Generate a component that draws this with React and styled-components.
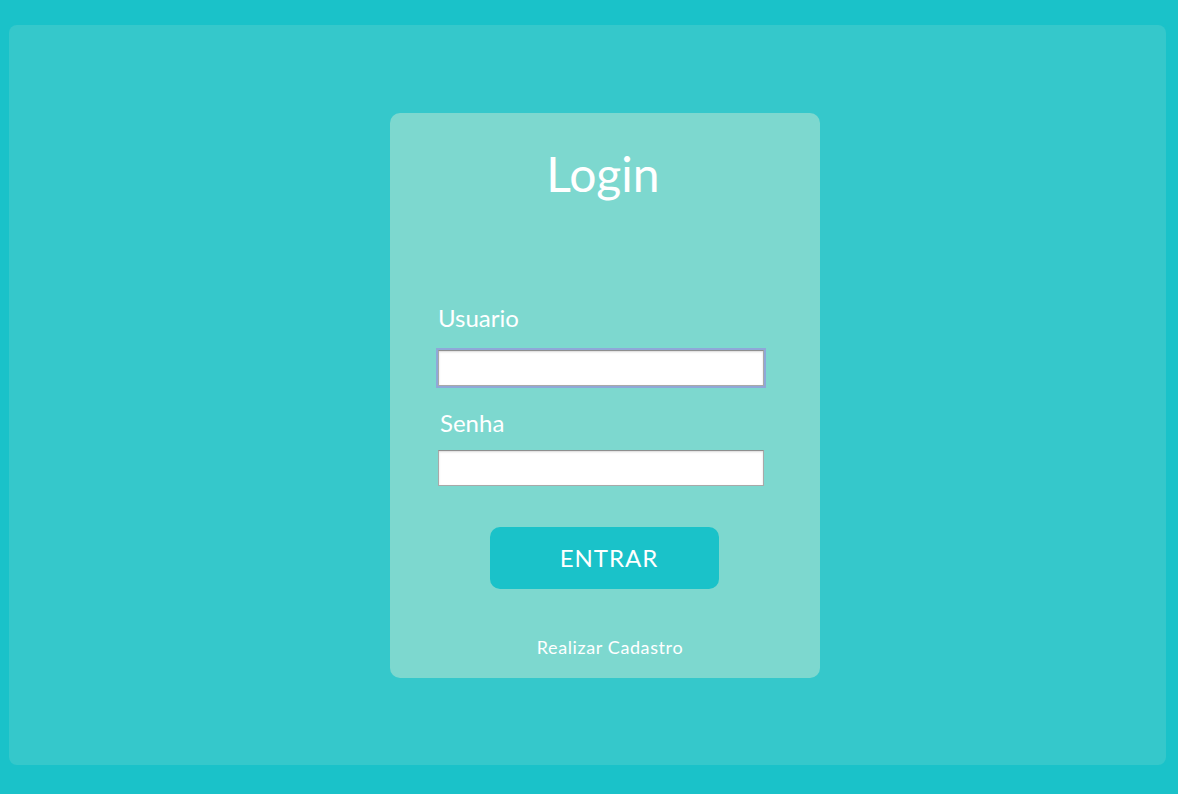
import React from 'react';
import styled, { createGlobalStyle } from 'styled-components';

const GlobalStyle = createGlobalStyle`
  html, body {
    margin: 0;
    padding: 0;
    background: #1ac2c9;
    font-family: Lato, "Open Sans", sans-serif;
  }
`;

const Page = styled.div`
  box-sizing: border-box;
  width: 1178px;
  height: 794px;
  padding: 25px 12px 29px 9px;
  background: #1ac2c9;
`;

const Panel = styled.div`
  height: 100%;
  background: #35c8cb;
  border-radius: 8px;
  display: flex;
  align-items: center;
  padding-left: 381px;
`;

const Card = styled.form`
  box-sizing: border-box;
  width: 430px;
  height: 565px;
  background: #7dd8cf;
  border-radius: 10px;
  padding: 32px 56px 0 48px;
  display: flex;
  flex-direction: column;
  color: #ffffff;
`;

const Title = styled.h1`
  margin: 0 0 102px 0;
  font-size: 48px;
  font-weight: 400;
  line-height: 1.2;
  text-align: center;
  padding-left: 4px;
`;

const Label = styled.label`
  font-size: 24px;
  line-height: 1.2;
  margin: 0 0 ${(p) => p.$gap}px ${(p) => p.$indent || 0}px;
`;

const Input = styled.input`
  box-sizing: border-box;
  width: 326px;
  height: 36px;
  border: 1px solid #a9a9a9;
  border-top-color: #8f8f8f;
  background: #ffffff;
  font-size: 16px;
  padding: 0 4px;
  margin-bottom: ${(p) => p.$gap}px;
  outline: none;
  caret-color: #000000;
  box-shadow: ${(p) =>
    p.$focused
      ? '0 0 0 2px #8fa8d8, inset 0 1px 2px rgba(0,0,0,0.15)'
      : 'inset 0 1px 2px rgba(0,0,0,0.15)'};
`;

const Button = styled.button`
  align-self: center;
  width: 229px;
  height: 62px;
  margin-left: 6px;
  padding: 0 0 0 10px;
  border: none;
  border-radius: 10px;
  background: #1ac2c9;
  color: #ffffff;
  font-family: Lato, "Open Sans", sans-serif;
  font-size: 24px;
  letter-spacing: 1px;
  cursor: pointer;
`;

const RegisterLink = styled.a`
  margin-top: 48px;
  align-self: center;
  margin-left: 18px;
  color: #ffffff;
  font-size: 18px;
  line-height: 1.2;
  letter-spacing: 0.6px;
  text-decoration: none;
  cursor: pointer;
`;

const App = () => {
  return (
    <>
      <GlobalStyle />
      <Page>
        <Panel>
          <Card onSubmit={(e) => e.preventDefault()}>
            <Title>Login</Title>
            <Label htmlFor="usuario" $gap={17}>Usuario</Label>
            <Input id="usuario" type="text" autoFocus $focused $gap={23} />
            <Label htmlFor="senha" $gap={12} $indent={2}>Senha</Label>
            <Input id="senha" type="password" $gap={41} />
            <Button type="submit">ENTRAR</Button>
            <RegisterLink>Realizar Cadastro</RegisterLink>
          </Card>
        </Panel>
      </Page>
    </>
  );
};

export default App;
